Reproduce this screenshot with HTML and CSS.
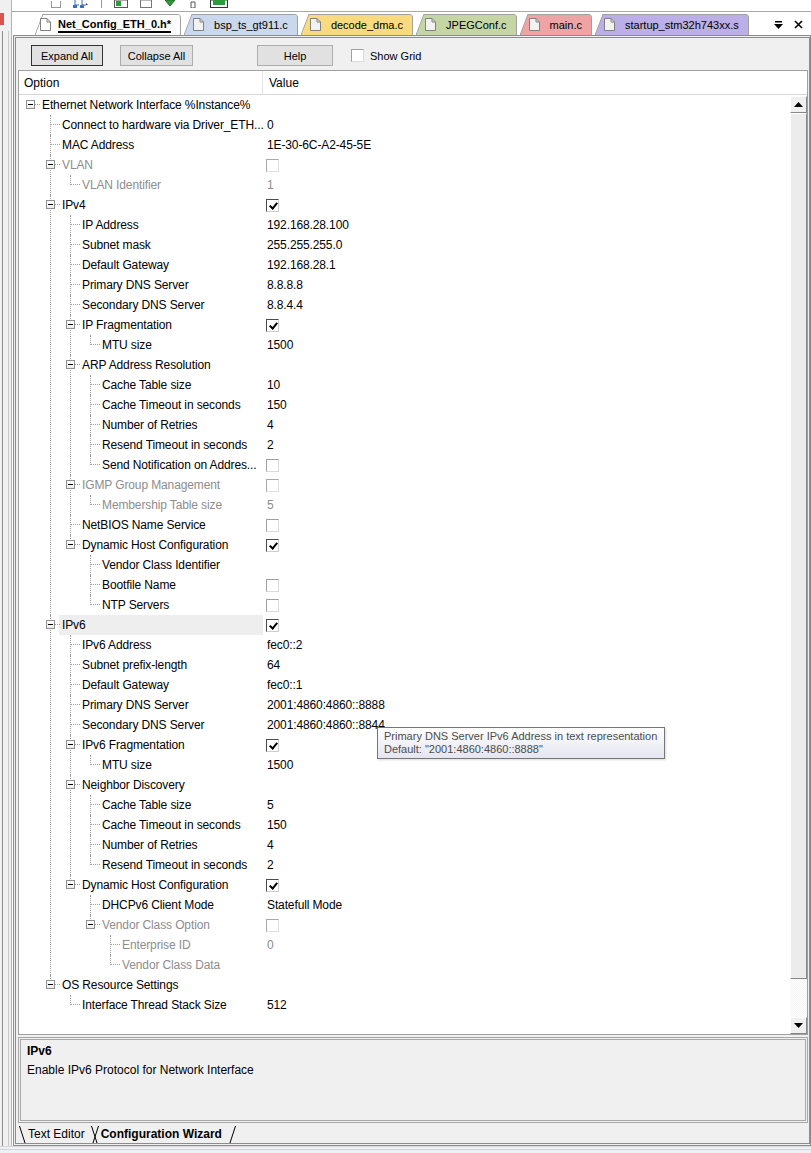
FILE: index.html
```html
<!DOCTYPE html>
<html lang="en">
<head>
  <meta charset="UTF-8">
  <title>Net_Config_ETH_0.h - Configuration Wizard</title>
  <link rel="stylesheet" href="styles.css">
</head>
<body>
<div class="app">
  <div class="side"><span class="side-mark"></span><span class="side-rule"></span></div>

  <div class="editor">
    <div class="toolbar">
      <span class="tb tb-box"></span>
      <svg class="tb" width="16" height="8" viewBox="0 0 16 8"><path d="M2 0v5h4M9 0v5h4" fill="none" stroke="#3a6fc0"/><rect x="0" y="5" width="4" height="3" fill="#3a6fc0"/><rect x="7" y="5" width="4" height="3" fill="#3a6fc0"/><path d="M13 3l2 2-2 0z" fill="#333"/></svg>
      <span class="tb-sep"></span>
      <svg class="tb" width="14" height="8" viewBox="0 0 14 8"><rect x="0.5" y="0" width="13" height="7.5" fill="#fff" stroke="#555"/><rect x="2" y="1" width="5" height="5" fill="#2f9a3a"/></svg>
      <svg class="tb" width="12" height="8" viewBox="0 0 12 8"><rect x="0.5" y="0" width="11" height="7.5" fill="#fff" stroke="#777"/></svg>
      <svg class="tb" width="12" height="8" viewBox="0 0 12 8"><path d="M1 0h10l-5 6z" fill="#2f9a3a" stroke="#1e6b27"/></svg>
      <svg class="tb" width="10" height="8" viewBox="0 0 10 8"><path d="M3 2h4v6h-4z" fill="#fff" stroke="#555"/></svg>
      <svg class="tb" width="18" height="8" viewBox="0 0 18 8"><rect x="0.5" y="0" width="17" height="7.5" fill="#fff" stroke="#333"/><rect x="3" y="0" width="12" height="5" fill="#2f9a3a"/></svg>
    </div>

    <div class="tabbar">
      <div class="tab active" style="--c:#fcfcfc">
        <svg class="doc" width="11" height="13" viewBox="0 0 11 13"><path d="M.5.5h6.5l3.5 3.5v8.5h-10z" fill="#fff" stroke="#808080"/><path d="M7 .5v3.5h3.5" fill="none" stroke="#808080"/></svg>
        <span class="tab-name">Net_Config_ETH_0.h*</span>
      </div>
      <div class="tab" style="--c:#cad8ee">
        <svg class="doc" width="11" height="13" viewBox="0 0 11 13"><path d="M.5.5h6.5l3.5 3.5v8.5h-10z" fill="#f2f2f2" stroke="#808080"/><path d="M7 .5v3.5h3.5" fill="none" stroke="#808080"/></svg>
        <span class="tab-name">bsp_ts_gt911.c</span>
      </div>
      <div class="tab" style="--c:#f9da7e">
        <svg class="doc" width="11" height="13" viewBox="0 0 11 13"><path d="M.5.5h6.5l3.5 3.5v8.5h-10z" fill="#f2f2f2" stroke="#808080"/><path d="M7 .5v3.5h3.5" fill="none" stroke="#808080"/></svg>
        <span class="tab-name">decode_dma.c</span>
      </div>
      <div class="tab" style="--c:#c5d6a4">
        <svg class="doc" width="11" height="13" viewBox="0 0 11 13"><path d="M.5.5h6.5l3.5 3.5v8.5h-10z" fill="#f2f2f2" stroke="#808080"/><path d="M7 .5v3.5h3.5" fill="none" stroke="#808080"/></svg>
        <span class="tab-name">JPEGConf.c</span>
      </div>
      <div class="tab" style="--c:#eea4a4">
        <svg class="doc" width="11" height="13" viewBox="0 0 11 13"><path d="M.5.5h6.5l3.5 3.5v8.5h-10z" fill="#f2f2f2" stroke="#808080"/><path d="M7 .5v3.5h3.5" fill="none" stroke="#808080"/></svg>
        <span class="tab-name">main.c</span>
      </div>
      <div class="tab" style="--c:#bcaee6">
        <svg class="doc" width="11" height="13" viewBox="0 0 11 13"><path d="M.5.5h6.5l3.5 3.5v8.5h-10z" fill="#f2f2f2" stroke="#808080"/><path d="M7 .5v3.5h3.5" fill="none" stroke="#808080"/></svg>
        <span class="tab-name">startup_stm32h743xx.s</span>
      </div>
      <div class="tab-tools">
        <svg width="9" height="8" viewBox="0 0 9 8"><rect x="1" y="0" width="7" height="1.5" fill="#000"/><path d="M0 3h9l-4.5 5z" fill="#000"/></svg>
        <svg width="9" height="9" viewBox="0 0 9 9"><path d="M1 1l7 7M8 1l-7 7" stroke="#000" stroke-width="1.6"/></svg>
      </div>
    </div>

    <div class="frame">
      <div class="buttons">
        <button class="btn default">Expand All</button>
        <button class="btn">Collapse All</button>
        <button class="btn help">Help</button>
        <label class="grid-opt"><span class="chk"></span>Show Grid</label>
      </div>

      <div class="grid">
        <div class="grid-head">
          <div class="col-opt">Option</div>
          <div class="col-val">Value</div>
        </div>
        <div class="grid-body">
          <div class="tree">
            <div class="node l0">
              <div class="row"><i class="tog"></i><span class="opt">Ethernet Network Interface %Instance%</span><span class="val"></span></div>
              <div class="kids">
                <div class="node l1"><div class="row"><span class="opt">Connect to hardware via Driver_ETH...</span><span class="val">0</span></div></div>
                <div class="node l1"><div class="row"><span class="opt">MAC Address</span><span class="val">1E-30-6C-A2-45-5E</span></div></div>
                <div class="node l1">
                  <div class="row off"><i class="tog"></i><span class="opt">VLAN</span><span class="val"><span class="chk"></span></span></div>
                  <div class="kids">
                    <div class="node l2"><div class="row off"><span class="opt">VLAN Identifier</span><span class="val">1</span></div></div>
                  </div>
                </div>
                <div class="node l1">
                  <div class="row"><i class="tog"></i><span class="opt">IPv4</span><span class="val"><span class="chk on"></span></span></div>
                  <div class="kids">
                    <div class="node l2"><div class="row"><span class="opt">IP Address</span><span class="val">192.168.28.100</span></div></div>
                    <div class="node l2"><div class="row"><span class="opt">Subnet mask</span><span class="val">255.255.255.0</span></div></div>
                    <div class="node l2"><div class="row"><span class="opt">Default Gateway</span><span class="val">192.168.28.1</span></div></div>
                    <div class="node l2"><div class="row"><span class="opt">Primary DNS Server</span><span class="val">8.8.8.8</span></div></div>
                    <div class="node l2"><div class="row"><span class="opt">Secondary DNS Server</span><span class="val">8.8.4.4</span></div></div>
                    <div class="node l2">
                      <div class="row"><i class="tog"></i><span class="opt">IP Fragmentation</span><span class="val"><span class="chk on"></span></span></div>
                      <div class="kids">
                        <div class="node l3"><div class="row"><span class="opt">MTU size</span><span class="val">1500</span></div></div>
                      </div>
                    </div>
                    <div class="node l2">
                      <div class="row"><i class="tog"></i><span class="opt">ARP Address Resolution</span><span class="val"></span></div>
                      <div class="kids">
                        <div class="node l3"><div class="row"><span class="opt">Cache Table size</span><span class="val">10</span></div></div>
                        <div class="node l3"><div class="row"><span class="opt">Cache Timeout in seconds</span><span class="val">150</span></div></div>
                        <div class="node l3"><div class="row"><span class="opt">Number of Retries</span><span class="val">4</span></div></div>
                        <div class="node l3"><div class="row"><span class="opt">Resend Timeout in seconds</span><span class="val">2</span></div></div>
                        <div class="node l3"><div class="row"><span class="opt">Send Notification on Addres...</span><span class="val"><span class="chk"></span></span></div></div>
                      </div>
                    </div>
                    <div class="node l2">
                      <div class="row off"><i class="tog"></i><span class="opt">IGMP Group Management</span><span class="val"><span class="chk"></span></span></div>
                      <div class="kids">
                        <div class="node l3"><div class="row off"><span class="opt">Membership Table size</span><span class="val">5</span></div></div>
                      </div>
                    </div>
                    <div class="node l2"><div class="row"><span class="opt">NetBIOS Name Service</span><span class="val"><span class="chk"></span></span></div></div>
                    <div class="node l2">
                      <div class="row"><i class="tog"></i><span class="opt">Dynamic Host Configuration</span><span class="val"><span class="chk on"></span></span></div>
                      <div class="kids">
                        <div class="node l3"><div class="row"><span class="opt">Vendor Class Identifier</span><span class="val"></span></div></div>
                        <div class="node l3"><div class="row"><span class="opt">Bootfile Name</span><span class="val"><span class="chk"></span></span></div></div>
                        <div class="node l3"><div class="row"><span class="opt">NTP Servers</span><span class="val"><span class="chk"></span></span></div></div>
                      </div>
                    </div>
                  </div>
                </div>
                <div class="node l1">
                  <div class="row sel"><i class="tog"></i><span class="opt"><span class="hl">IPv6</span></span><span class="val"><span class="chk on"></span></span></div>
                  <div class="kids">
                    <div class="node l2"><div class="row"><span class="opt">IPv6 Address</span><span class="val">fec0::2</span></div></div>
                    <div class="node l2"><div class="row"><span class="opt">Subnet prefix-length</span><span class="val">64</span></div></div>
                    <div class="node l2"><div class="row"><span class="opt">Default Gateway</span><span class="val">fec0::1</span></div></div>
                    <div class="node l2"><div class="row"><span class="opt">Primary DNS Server</span><span class="val">2001:4860:4860::8888</span></div></div>
                    <div class="node l2"><div class="row"><span class="opt">Secondary DNS Server</span><span class="val">2001:4860:4860::8844</span></div></div>
                    <div class="node l2">
                      <div class="row"><i class="tog"></i><span class="opt">IPv6 Fragmentation</span><span class="val"><span class="chk on"></span></span></div>
                      <div class="kids">
                        <div class="node l3"><div class="row"><span class="opt">MTU size</span><span class="val">1500</span></div></div>
                      </div>
                    </div>
                    <div class="node l2">
                      <div class="row"><i class="tog"></i><span class="opt">Neighbor Discovery</span><span class="val"></span></div>
                      <div class="kids">
                        <div class="node l3"><div class="row"><span class="opt">Cache Table size</span><span class="val">5</span></div></div>
                        <div class="node l3"><div class="row"><span class="opt">Cache Timeout in seconds</span><span class="val">150</span></div></div>
                        <div class="node l3"><div class="row"><span class="opt">Number of Retries</span><span class="val">4</span></div></div>
                        <div class="node l3"><div class="row"><span class="opt">Resend Timeout in seconds</span><span class="val">2</span></div></div>
                      </div>
                    </div>
                    <div class="node l2">
                      <div class="row"><i class="tog"></i><span class="opt">Dynamic Host Configuration</span><span class="val"><span class="chk on"></span></span></div>
                      <div class="kids">
                        <div class="node l3"><div class="row"><span class="opt">DHCPv6 Client Mode</span><span class="val">Statefull Mode</span></div></div>
                        <div class="node l3">
                          <div class="row off"><i class="tog"></i><span class="opt">Vendor Class Option</span><span class="val"><span class="chk"></span></span></div>
                          <div class="kids">
                            <div class="node l4"><div class="row off"><span class="opt">Enterprise ID</span><span class="val">0</span></div></div>
                            <div class="node l4"><div class="row off"><span class="opt">Vendor Class Data</span><span class="val"></span></div></div>
                          </div>
                        </div>
                      </div>
                    </div>
                  </div>
                </div>
                <div class="node l1">
                  <div class="row"><i class="tog"></i><span class="opt">OS Resource Settings</span><span class="val"></span></div>
                  <div class="kids">
                    <div class="node l2"><div class="row"><span class="opt">Interface Thread Stack Size</span><span class="val">512</span></div></div>
                  </div>
                </div>
              </div>
            </div>
          </div>

          <div class="vscroll">
            <div class="sb-btn"><svg width="9" height="5" viewBox="0 0 9 5"><path d="M4.5 0L9 5H0z" fill="#000"/></svg></div>
            <div class="sb-thumb"></div>
            <div class="sb-track"></div>
            <div class="sb-btn"><svg width="9" height="5" viewBox="0 0 9 5"><path d="M0 0h9L4.5 5z" fill="#000"/></svg></div>
          </div>
        </div>

        <div class="tip">
          <div>Primary DNS Server IPv6 Address in text representation</div>
          <div>Default: "2001:4860:4860::8888"</div>
        </div>
      </div>

      <div class="desc">
        <div class="desc-title">IPv6</div>
        <div>Enable IPv6 Protocol for Network Interface</div>
      </div>

      <div class="sheets">
        <span class="sheet">Text Editor</span>
        <span class="sheet active">Configuration Wizard</span>
      </div>
    </div>
  </div>
</div>
<div class="status"></div>
</body>
</html>
```

FILE: styles.css
```css
* {
  box-sizing: border-box;
}
html, body {
  margin: 0;
}
body {
  width: 811px;
  height: 1153px;
  overflow: hidden;
  background: #f0f0f0;
  font: 12px "Liberation Sans", Arial, sans-serif;
  color: #000;
}
.app {
  display: flex;
  height: 1146px;
}

/* left dock sliver */
.side {
  width: 12px;
  flex: none;
  display: flex;
  flex-direction: column;
  background: #f0f0f0;
  border-right: 1px solid #b4b4b4;
  padding-top: 13px;
}
.side-mark {
  display: block;
  width: 4px;
  height: 12px;
  background: #d9534f;
}
.side-rule {
  display: block;
  flex: 1;
  width: 7px;
  margin: 6px 0 0 2px;
  border-left: 1px solid #8c8c8c;
  border-right: 1px solid #c8c8c8;
}

.editor {
  flex: 1;
  display: flex;
  flex-direction: column;
  background: #fff;
}

/* toolbar, only its lower edge is visible */
.toolbar {
  height: 11px;
  display: flex;
  align-items: flex-end;
  gap: 12px;
  padding: 0 0 3px 39px;
  overflow: hidden;
}
.tb {
  display: block;
  flex: none;
}
.tb-box {
  width: 10px;
  height: 7px;
  border: 1px solid #9a9a9a;
  border-top: none;
  background: #fff;
}
.tb-sep {
  width: 1px;
  height: 8px;
  background: #9a9a9a;
}

/* document tabs */
.tabbar {
  height: 24px;
  display: flex;
  align-items: flex-end;
  padding-left: 23px;
  border-top: 1px solid #a8a8a8;
}
.tab {
  --c: #fff;
  --edge: #a0a0a0;
  height: 21px;
  display: flex;
  align-items: center;
  gap: 10px;
  padding: 0 9px 0 9px;
  border-right: 1px solid var(--edge);
  border-top-right-radius: 4px;
  background:
    linear-gradient(var(--edge), var(--edge)) 8px 0 / 100% 1px no-repeat,
    linear-gradient(to top left, var(--c) calc(50% - 0.8px), var(--edge) 50%, transparent calc(50% + 0.8px)) 0 0 / 8px 100% no-repeat,
    linear-gradient(var(--c), var(--c)) 8px 0 / 100% 100% no-repeat;
  font-size: 11px;
  white-space: nowrap;
}
.tab + .tab {
  margin-left: 3px;
}
.doc {
  display: block;
  flex: none;
}
.tab.active {
  gap: 7px;
  padding-left: 5px;
  font-weight: bold;
}
.tab.active .tab-name {
  border-bottom: 2px solid #000;
  line-height: 13px;
  margin-top: 2px;
}
.tab-tools {
  margin-left: auto;
  display: flex;
  align-items: center;
  gap: 11px;
  height: 21px;
  padding-right: 8px;
}
.tab-tools svg {
  display: block;
}

/* editor frame */
.frame {
  flex: 1;
  display: flex;
  flex-direction: column;
  border: 3px double #8c8c8c;
  border-right-width: 2px;
  margin-left: 1px;
  background: #f0f0f0;
  padding: 0 0 0 2px;
}

.buttons {
  display: flex;
  align-items: center;
  height: 21px;
  margin: 7px 0 4px 13px;
}
.btn {
  height: 21px;
  padding: 0;
  font: 11px "Liberation Sans", Arial, sans-serif;
  color: #000;
  background: #e1e1e1;
  border: 1px solid #adadad;
  border-radius: 0;
}
.btn.default {
  width: 72px;
  border-color: #333;
  box-shadow: inset 0 0 0 1px #e1e1e1;
}
.btn + .btn {
  width: 73px;
  margin-left: 17px;
}
.btn.help {
  width: 76px;
  margin-left: 64px;
}
.grid-opt {
  display: flex;
  align-items: center;
  margin-left: 19px;
  font-size: 11px;
  gap: 6px;
}

/* option / value grid */
.grid {
  position: relative;
  flex: 1;
  display: flex;
  flex-direction: column;
  margin-right: 1px;
  border: 1px solid #a0a0a0;
  background: #fff;
}
.grid-head {
  display: grid;
  grid-template-columns: 244px 1fr;
  height: 24px;
  border-bottom: 1px solid #d5d5d5;
  line-height: 24px;
}
.col-opt {
  padding-left: 5px;
  border-right: 1px solid #e3e3e3;
}
.col-val {
  padding-left: 6px;
}
.grid-body {
  flex: 1;
  display: flex;
  min-height: 0;
}
.tree {
  flex: 1;
  letter-spacing: -0.12px;
}
.node {
  position: relative;
}
.node::before {
  content: "";
  position: absolute;
  left: var(--x);
  top: 0;
  bottom: 0;
  border-left: 1px dotted #a0a0a0;
}
.node:last-child::before {
  bottom: auto;
  height: 10px;
}
.l0 { --x: 11px; }
.l0::before { display: none; }
.l1 { --x: 31px; }
.l2 { --x: 51px; }
.l3 { --x: 71px; }
.l4 { --x: 91px; }

.row {
  position: relative;
  display: grid;
  grid-template-columns: 244px 1fr;
  height: 20px;
  line-height: 20px;
  white-space: nowrap;
}
.row::before {
  content: "";
  position: absolute;
  left: var(--x);
  top: 9px;
  width: 10px;
  border-top: 1px dotted #a0a0a0;
}
.opt {
  padding-left: calc(var(--x) + 12px);
}
.val {
  padding-left: 4px;
  display: flex;
  align-items: center;
}
.row.off {
  color: #8d8d8d;
}
.hl {
  display: block;
  margin-left: -3px;
  padding-left: 3px;
  background: #eeeeee;
}
.tog {
  position: absolute;
  z-index: 1;
  left: calc(var(--x) - 4px);
  top: 5px;
  width: 9px;
  height: 9px;
  border: 1px solid #8e8f8f;
  background: linear-gradient(#fff, #ececec);
}
.tog::after {
  content: "";
  position: absolute;
  left: 1px;
  top: 3px;
  width: 5px;
  height: 1px;
  background: #000;
}

/* checkboxes */
.chk {
  position: relative;
  display: block;
  width: 13px;
  height: 13px;
  margin-left: -1px;
  background: #fff;
  border: 1px solid;
  border-color: #a0a0a0 #dcdcdc #dcdcdc #a0a0a0;
}
.chk.on {
  border-color: #4a4a4a #cfcfcf #cfcfcf #4a4a4a;
}
.chk.on::after {
  content: "";
  position: absolute;
  left: 4px;
  top: 1px;
  width: 3px;
  height: 6px;
  border: solid #000;
  border-width: 0 2px 2px 0;
  transform: rotate(40deg);
}
.row.off .chk {
  border-color: #a8a8a8 #e0e0e0 #e0e0e0 #a8a8a8;
}

/* scrollbar */
.vscroll {
  width: 18px;
  flex: none;
  display: flex;
  flex-direction: column;
  padding: 1px 0 0 1px;
}
.sb-btn {
  height: 17px;
  display: flex;
  align-items: center;
  justify-content: center;
  background: #f0f0f0;
  border: 1px solid;
  border-color: #fff #888 #888 #fff;
}
.sb-thumb {
  height: 866px;
  background: #ececec;
  border: 1px solid;
  border-color: #fff #888 #888 #fff;
}
.sb-track {
  flex: 1;
  background:
    repeating-conic-gradient(#f4f4f4 0 25%, #fff 0 50%) 0 0 / 2px 2px;
}

/* tooltip */
.tip {
  position: absolute;
  left: 358px;
  top: 656px;
  width: 288px;
  height: 32px;
  padding: 2px 0 0 6px;
  border: 1px solid #767676;
  background: linear-gradient(#fff, #e4e5f0);
  color: #4c4c4c;
  font-size: 11px;
  line-height: 13px;
  box-shadow: 1px 1px 2px rgba(0, 0, 0, 0.15);
}

/* description */
.desc {
  height: 86px;
  margin: 2px 1px 0 0;
  padding: 2px 0 0 6px;
  border: 3px double #a8a8a8;
  line-height: 19px;
}
.desc-title {
  font-weight: bold;
}

/* bottom sheet tabs */
.sheets {
  height: 20px;
  display: flex;
  align-items: flex-end;
  padding-left: 1px;
}
.sheet {
  position: relative;
  height: 17px;
  line-height: 17px;
  padding: 0 14px 0 9px;
}
.sheet::before,
.sheet::after {
  content: "";
  position: absolute;
  top: 0;
  height: 17px;
  border-left: 1px solid #000;
  transform-origin: top;
}
.sheet::before {
  left: 0;
  transform: skewX(18deg);
}
.sheet::after {
  right: 0;
  transform: skewX(-18deg);
}
.sheet.active {
  font-weight: bold;
  margin-left: -8px;
  padding-left: 10px;
}

.status {
  height: 7px;
  border-top: 1px solid #d7d7d7;
  background: linear-gradient(#f0f0f0 0 2px, #cdd6e4 2px 3px, #f0f0f0 3px);
}
```
